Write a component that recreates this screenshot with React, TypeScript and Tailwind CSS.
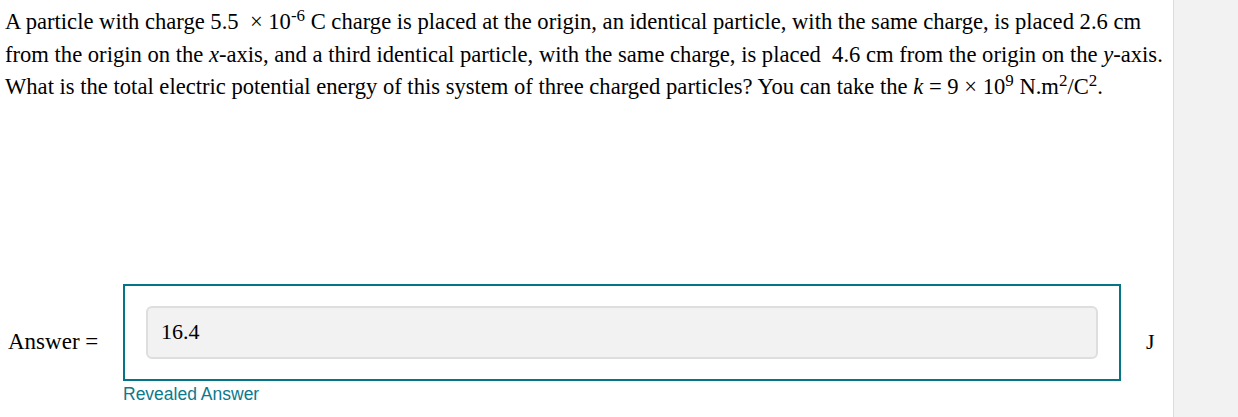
export default function App() {
  return (
    <div className="flex h-[417px] w-full overflow-hidden bg-white text-black">
      <div className="flex-1 pl-[5px] pt-[6px]" style={{ fontFamily: '"Liberation Serif", "Times New Roman", serif' }}>
        <p className="whitespace-nowrap text-[22.6px] leading-[32.5px]">
          A particle with charge 5.5&nbsp; × 10<sup>-6</sup> C charge is placed at the origin, an identical particle, with the same charge, is placed 2.6 cm
          <br />
          from the origin on the <i>x</i>-axis, and a third identical particle, with the same charge, is placed&nbsp; 4.6 cm from the origin on the <i>y</i>-axis.
          <br />
          What is the total electric potential energy of this system of three charged particles? You can take the <i>k</i> = 9 × 10<sup>9</sup> N.m<sup>2</sup>/C<sup>2</sup>.
        </p>

        <div className="mt-[180px] flex items-center">
          <div className="w-[118px] pl-[3px] pt-[21px] text-[23px]">Answer =</div>
          <div className="w-[998px] border-2 border-[#047487] px-[21px] py-[20px]">
            <div className="flex h-[53px] items-center rounded-[6px] border-2 border-[#dedede] bg-[#f2f2f2] px-[13px] pb-[2px] text-[22px]">
              16.4
            </div>
          </div>
          <div className="pl-[25px] pt-[19px] text-[22px]">J</div>
        </div>
        <div
          className="mt-[3px] pl-[118px] text-[17.5px] leading-[20px] text-[#0a7a8c]"
          style={{ fontFamily: '"Liberation Sans", Arial, sans-serif' }}
        >
          Revealed Answer
        </div>
      </div>
      <div className="h-full w-[65px] border-l border-[#dcdcdc] bg-[#f2f2f2]" />
    </div>
  );
}
